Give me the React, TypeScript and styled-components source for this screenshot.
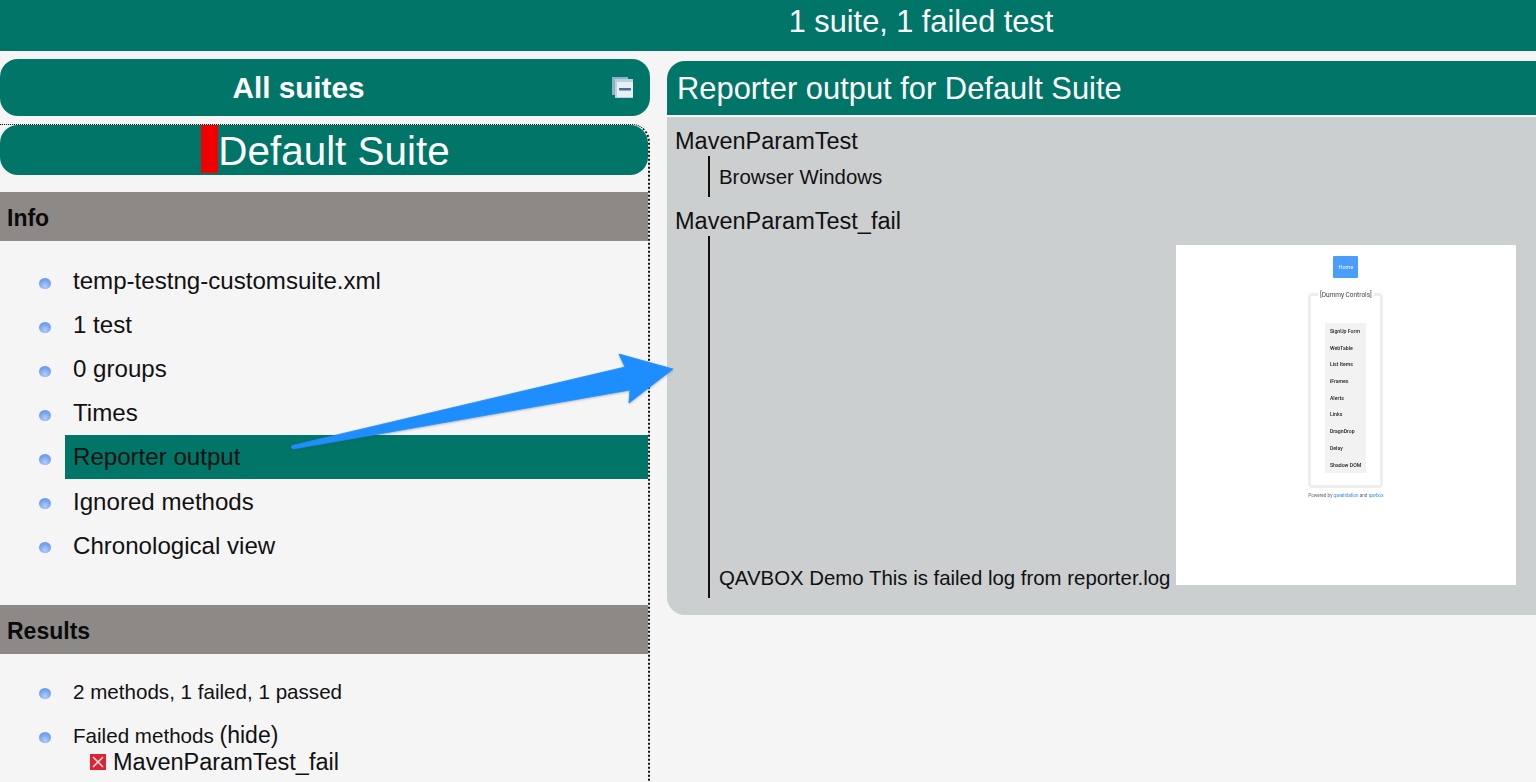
import styled, { createGlobalStyle } from "styled-components";

const GlobalStyle = createGlobalStyle`
  html, body {
    margin: 0;
    padding: 0;
    background: #f5f5f5;
    font-family: "Liberation Sans", Arial, sans-serif;
    color: #111;
  }
`;

const teal = "#017567";

const Page = styled.div`
  position: relative;
  width: 1536px;
  height: 782px;
  overflow: hidden;
`;

const Banner = styled.div`
  height: 51px;
  padding-left: 306px;
  background: ${teal};
  color: #fff;
  font-size: 30.7px;
  line-height: 43px;
  text-align: center;
`;

const Columns = styled.div`
  display: flex;
  gap: 17px;
`;

const LeftColumn = styled.div`
  width: 650px;
  flex: none;
  padding-top: 8px;
`;

const AllSuites = styled.div`
  position: relative;
  height: 57px;
  padding-right: 53px;
  box-sizing: border-box;
  border-radius: 18px;
  background: ${teal};
  color: #fff;
  font-size: 29.7px;
  font-weight: bold;
  line-height: 58px;
  text-align: center;
`;

const CollapseIcon = styled.svg`
  position: absolute;
  top: 18px;
  right: 16px;
  filter: blur(0.4px);
`;

const SuitePanel = styled.div`
  margin-top: 8px;
  height: 660px;
  border-top: 1px dotted #111;
  border-right: 2px dotted #111;
  border-top-right-radius: 18px;
`;

const SuiteTitle = styled.div`
  display: flex;
  justify-content: center;
  height: 50px;
  padding-left: 3px;
  box-sizing: border-box;
  border-radius: 18px;
  background: ${teal};
  color: #fff;
  font-size: 40.4px;
  line-height: 52px;
`;

const RedMark = styled.span`
  width: 17px;
  height: 48px;
  background: #f00000;
`;

const SectionBar = styled.div<{ $gap: number }>`
  height: 49px;
  margin-top: ${(p) => p.$gap}px;
  padding-left: 7px;
  background: #8d8987;
  color: #0a0a0a;
  font-size: 23px;
  font-weight: bold;
  line-height: 52px;
`;

const List = styled.ul<{ $top: number }>`
  list-style: none;
  margin: 0;
  padding: ${(p) => p.$top}px 0 0;
`;

const Item = styled.li<{ $small?: boolean }>`
  display: flex;
  align-items: center;
  height: 44.1px;
  padding-left: 39px;
  font-size: ${(p) => (p.$small ? 20.6 : 24.1)}px;
`;

const Bullet = styled.span`
  flex: none;
  width: 12px;
  height: 11px;
  margin-right: 14px;
  margin-top: 4px;
  border-radius: 50%;
  background: radial-gradient(circle at 50% 75%, #b4cef8 0, #79a5f2 55%, #5a8ce3 100%);
`;

const ItemLabel = styled.span<{ $active?: boolean }>`
  flex: 1;
  padding-left: 8px;
  line-height: 44px;
  background: ${(p) => (p.$active ? teal : "transparent")};
`;

const Hide = styled.span`
  font-size: 23px;
`;

const FailedRow = styled.div`
  display: flex;
  align-items: center;
  gap: 7px;
  margin-top: -9px;
  padding-left: 90px;
  font-size: 23.5px;
`;

const RightColumn = styled.div`
  flex: 1;
  padding-top: 10px;
`;

const ReportHeader = styled.div`
  height: 54px;
  padding-left: 10px;
  border-top-left-radius: 18px;
  background: ${teal};
  color: #fff;
  font-size: 30.9px;
  line-height: 55px;
`;

const ReportBody = styled.div`
  height: 498px;
  margin-top: 2px;
  padding: 11px 0 0 8px;
  box-sizing: border-box;
  border-bottom-left-radius: 18px;
  background: #cbcfd0;
`;

const TestName = styled.div`
  font-size: 23.5px;
  line-height: 27px;
`;

const TestOutput = styled.div<{ $height: number }>`
  display: flex;
  align-items: flex-end;
  height: ${(p) => p.$height}px;
  margin: 1px 0 11px 33px;
  padding-left: 9px;
  border-left: 2px solid #111;
  font-size: 20.4px;
  line-height: 24px;
`;

const OutputText = styled.span`
  padding-bottom: 8px;
`;

const Shot = styled.div`
  flex: none;
  display: flex;
  flex-direction: column;
  align-items: center;
  width: 340px;
  height: 340px;
  margin: 0 0 13px 6px;
  padding-top: 11px;
  box-sizing: border-box;
  background: #fff;
  font-family: Roboto, "Liberation Sans", sans-serif;
  filter: blur(0.3px);
`;

const ShotHome = styled.div`
  width: 25px;
  height: 22px;
  margin-right: 1px;
  border-radius: 1px;
  background: #4a9dfb;
  color: #f4f8ff;
  font-size: 5.5px;
  line-height: 22px;
  text-align: center;
`;

const ShotFieldset = styled.div`
  position: relative;
  width: 75px;
  height: 195px;
  margin: 15px 2px 0 0;
  padding: 27px 0 0 14px;
  box-sizing: border-box;
  border: 3px solid #eeeeee;
  border-radius: 4px;
`;

const ShotLegend = styled.span`
  position: absolute;
  top: -6px;
  left: 7px;
  padding: 0 2px;
  background: #fff;
  color: #444;
  font-size: 6.5px;
  line-height: 10px;
  white-space: nowrap;
`;

const ShotLink = styled.div`
  width: 41px;
  height: 16.7px;
  padding-left: 5px;
  box-sizing: border-box;
  background: #f2f2f2;
  color: #222;
  font-size: 5.2px;
  font-weight: 500;
  line-height: 16.7px;
  white-space: nowrap;
`;

const ShotFooter = styled.div`
  margin: 4px 1px 0 0;
  color: #666;
  font-size: 4.65px;
  line-height: 8px;
  white-space: nowrap;
`;

const ShotAnchor = styled.span`
  color: #3d8be8;
`;

const ArrowOverlay = styled.svg`
  position: absolute;
  top: 0;
  left: 0;
  pointer-events: none;
`;

const infoItems = [
  "temp-testng-customsuite.xml",
  "1 test",
  "0 groups",
  "Times",
  "Reporter output",
  "Ignored methods",
  "Chronological view",
];

const shotLinks = [
  "SignUp Form",
  "WebTable",
  "List Items",
  "iFrames",
  "Alerts",
  "Links",
  "DragnDrop",
  "Delay",
  "Shadow DOM",
];

function App() {
  return (
    <Page>
      <GlobalStyle />
      <Banner>1 suite, 1 failed test</Banner>
      <Columns>
        <LeftColumn>
          <AllSuites>
            All suites
            <CollapseIcon width="22" height="22" viewBox="0 0 22 22">
              <rect x="0" y="0" width="16" height="18" fill="#8fb0c8" />
              <rect x="3" y="2" width="18" height="19" fill="#bcd0e0" />
              <rect x="5" y="5" width="16" height="15" fill="#e8f0f5" />
              <rect x="7" y="11" width="12" height="2.5" fill="#4a6f96" />
            </CollapseIcon>
          </AllSuites>
          <SuitePanel>
            <SuiteTitle>
              <RedMark />
              Default Suite
            </SuiteTitle>
            <SectionBar $gap={17}>Info</SectionBar>
            <List $top={18}>
              {infoItems.map((item) => (
                <Item key={item}>
                  <Bullet />
                  <ItemLabel $active={item === "Reporter output"}>{item}</ItemLabel>
                </Item>
              ))}
            </List>
            <SectionBar $gap={37}>Results</SectionBar>
            <List $top={16}>
              <Item $small>
                <Bullet />
                <ItemLabel>2 methods, 1 failed, 1 passed</ItemLabel>
              </Item>
              <Item $small>
                <Bullet />
                <ItemLabel>
                  Failed methods <Hide>(hide)</Hide>
                </ItemLabel>
              </Item>
            </List>
            <FailedRow>
              <svg width="16" height="16" viewBox="0 0 16 16">
                <rect width="16" height="16" fill="#dd2233" />
                <path d="M3 3l10 10M13 3L3 13" stroke="#fbe4e4" strokeWidth="1.5" />
              </svg>
              MavenParamTest_fail
            </FailedRow>
          </SuitePanel>
        </LeftColumn>
        <RightColumn>
          <ReportHeader>Reporter output for Default Suite</ReportHeader>
          <ReportBody>
            <TestName>MavenParamTest</TestName>
            <TestOutput $height={41}>
              <OutputText>Browser Windows</OutputText>
            </TestOutput>
            <TestName>MavenParamTest_fail</TestName>
            <TestOutput $height={362}>
              <OutputText>QAVBOX Demo This is failed log from reporter.log</OutputText>
              <Shot>
                <ShotHome>Home</ShotHome>
                <ShotFieldset>
                  <ShotLegend>[Dummy Controls]</ShotLegend>
                  {shotLinks.map((link) => (
                    <ShotLink key={link}>{link}</ShotLink>
                  ))}
                </ShotFieldset>
                <ShotFooter>
                  Powered by <ShotAnchor>qavalidation</ShotAnchor> and <ShotAnchor>qavbox</ShotAnchor>
                </ShotFooter>
              </Shot>
            </TestOutput>
          </ReportBody>
        </RightColumn>
      </Columns>
      <ArrowOverlay width="1536" height="782" viewBox="0 0 1536 782">
        <path
          d="M292 445.5 L625 367 L619 354 L673 369 L629 403 L630 390 L293 449 Q290 447 292 445.5 Z"
          fill="#1e8eff"
          stroke="#1e8eff"
          strokeWidth="0.8"
          strokeLinejoin="round"
          style={{ filter: "drop-shadow(0 1px 1px rgba(60,70,80,0.35))" }}
        />
      </ArrowOverlay>
    </Page>
  );
}

export default App;
